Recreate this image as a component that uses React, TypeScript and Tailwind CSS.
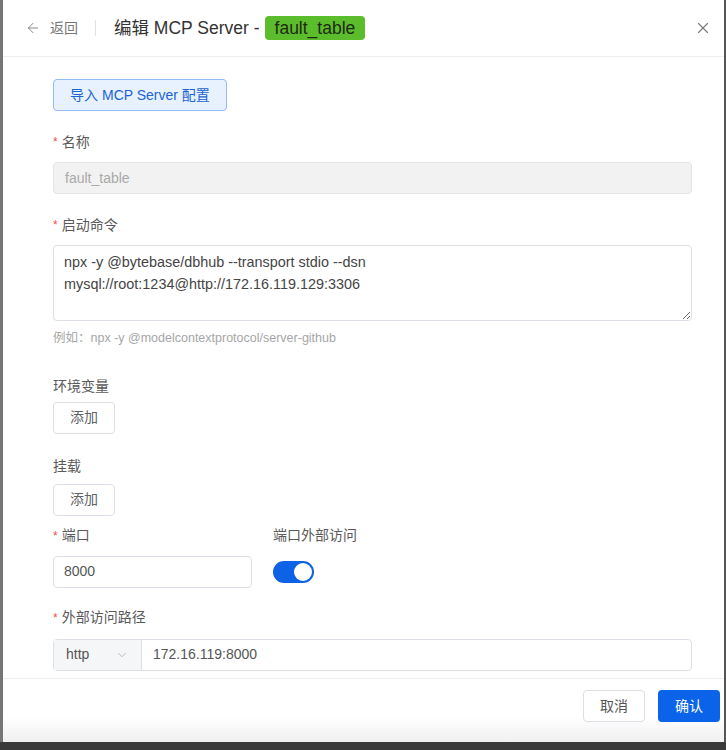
import { ArrowLeft, X, ChevronDown } from "lucide-react";

const font = "font-['Liberation_Sans','Noto_Sans_CJK_SC',sans-serif]";

function Label({ text, required }: { text: string; required?: boolean }) {
  return (
    <div className="flex h-5 items-center text-[14px] text-[#5a5a5a]">
      {required && <span className="mr-1 text-[12px] text-[#f05050]">*</span>}
      {text}
    </div>
  );
}

function AddButton() {
  return (
    <button className="h-8 w-[62px] rounded border border-[#dcdfe6] bg-white text-[14px] text-[#606266]">
      添加
    </button>
  );
}

export default function App() {
  return (
    <div className={`${font} flex h-[750px] w-[726px] flex-col overflow-hidden bg-[#3a3a3a]`}>
      <div className="flex min-h-0 flex-1">
        <div className="w-[3px] bg-[#767676]" />
        <div className="flex flex-1 flex-col bg-white">
          {/* Header */}
          <div className="flex h-[57px] shrink-0 items-center border-b border-[#eeeeee] pl-[22px] pr-[12px]">
            <ArrowLeft className="h-4 w-4 text-[#8a8a8a]" strokeWidth={1.5} />
            <span className="ml-[9px] text-[14px] text-[#777]">返回</span>
            <div className="ml-[17px] h-4 w-px bg-[#e2e2e2]" />
            <span className="ml-[18px] text-[17.5px] text-[#333]">编辑 MCP Server -</span>
            <span className="ml-[5px] flex h-[24px] items-center rounded bg-[#5cbd2c] px-[10px] text-[17.5px] text-[#1f2a12]">
              fault_table
            </span>
            <X className="ml-auto h-[18px] w-[18px] text-[#777]" strokeWidth={1.5} />
          </div>

          {/* Body */}
          <div className="flex flex-1 flex-col pl-[50px] pr-[32px] pt-[22px]">
            <button className="h-[32px] w-[174px] rounded border border-[#93bcf6] bg-[#e8f1fe] text-[14px] text-[#1a64d6]">
              导入 MCP Server 配置
            </button>

            <div className="mt-[21px]">
              <Label text="名称" required />
            </div>
            <div className="mt-[10px] flex h-[32px] items-center rounded border border-[#e4e4e4] bg-[#f2f2f2] px-[11px] text-[14px] text-[#a9a9a9]">
              fault_table
            </div>

            <div className="mt-[21px]">
              <Label text="启动命令" required />
            </div>
            <textarea
              className="mt-[10px] h-[76px] resize-y rounded border border-[#dcdfe6] px-[10px] py-[5px] text-[14.4px] leading-[22px] text-[#444] outline-none"
              defaultValue={"npx -y @bytebase/dbhub --transport stdio --dsn\nmysql://root:1234@http://172.16.119.129:3306"}
            />
            <div className="mt-[8px] text-[12.5px] text-[#a6a6a6]">
              例如：npx -y @modelcontextprotocol/server-github
            </div>

            <div className="mt-[29px]">
              <Label text="环境变量" />
            </div>
            <div className="mt-[5px]">
              <AddButton />
            </div>

            <div className="mt-[23px]">
              <Label text="挂载" />
            </div>
            <div className="mt-[7px]">
              <AddButton />
            </div>

            <div className="mt-[10px] flex gap-[21px]">
              <div className="w-[199px]">
                <Label text="端口" required />
                <div className="mt-[10px] flex h-[32px] items-center rounded border border-[#dcdfe6] px-[10px] text-[14px] text-[#555]">
                  8000
                </div>
              </div>
              <div>
                <Label text="端口外部访问" />
                <div className="mt-[15px] flex h-[22px] w-[41px] items-center rounded-full bg-[#0d62e6] pl-[21px]">
                  <div className="h-[18px] w-[18px] rounded-full bg-white" />
                </div>
              </div>
            </div>

            <div className="mt-[20px]">
              <Label text="外部访问路径" required />
            </div>
            <div className="mt-[11px] flex h-[32px] rounded border border-[#dcdfe6] text-[14px] text-[#555]">
              <div className="flex w-[88px] items-center justify-between border-r border-[#dcdfe6] bg-[#f5f6f8] pl-[12px] pr-[12px]">
                <span>http</span>
                <ChevronDown className="h-[14px] w-[14px] text-[#b0b0b0]" strokeWidth={1.5} />
              </div>
              <div className="flex items-center pl-[11px]">172.16.119:8000</div>
            </div>
          </div>

          {/* Footer */}
          <div className="flex h-[64px] shrink-0 items-start justify-end gap-[13px] border-t border-[#eeeeee] bg-gradient-to-b from-white from-60% to-[#f0f0f0] pr-[4px] pt-[11px]">
            <button className="h-[32px] w-[62px] rounded border border-[#dcdfe6] bg-white text-[14px] text-[#555]">
              取消
            </button>
            <button className="h-[32px] w-[62px] rounded bg-[#0a63e8] text-[14px] text-white">
              确认
            </button>
          </div>
        </div>
        <div className="w-[2px] bg-[#555]" />
      </div>
      <div className="h-[8px] shrink-0 bg-[#3a3a3a]" />
    </div>
  );
}
